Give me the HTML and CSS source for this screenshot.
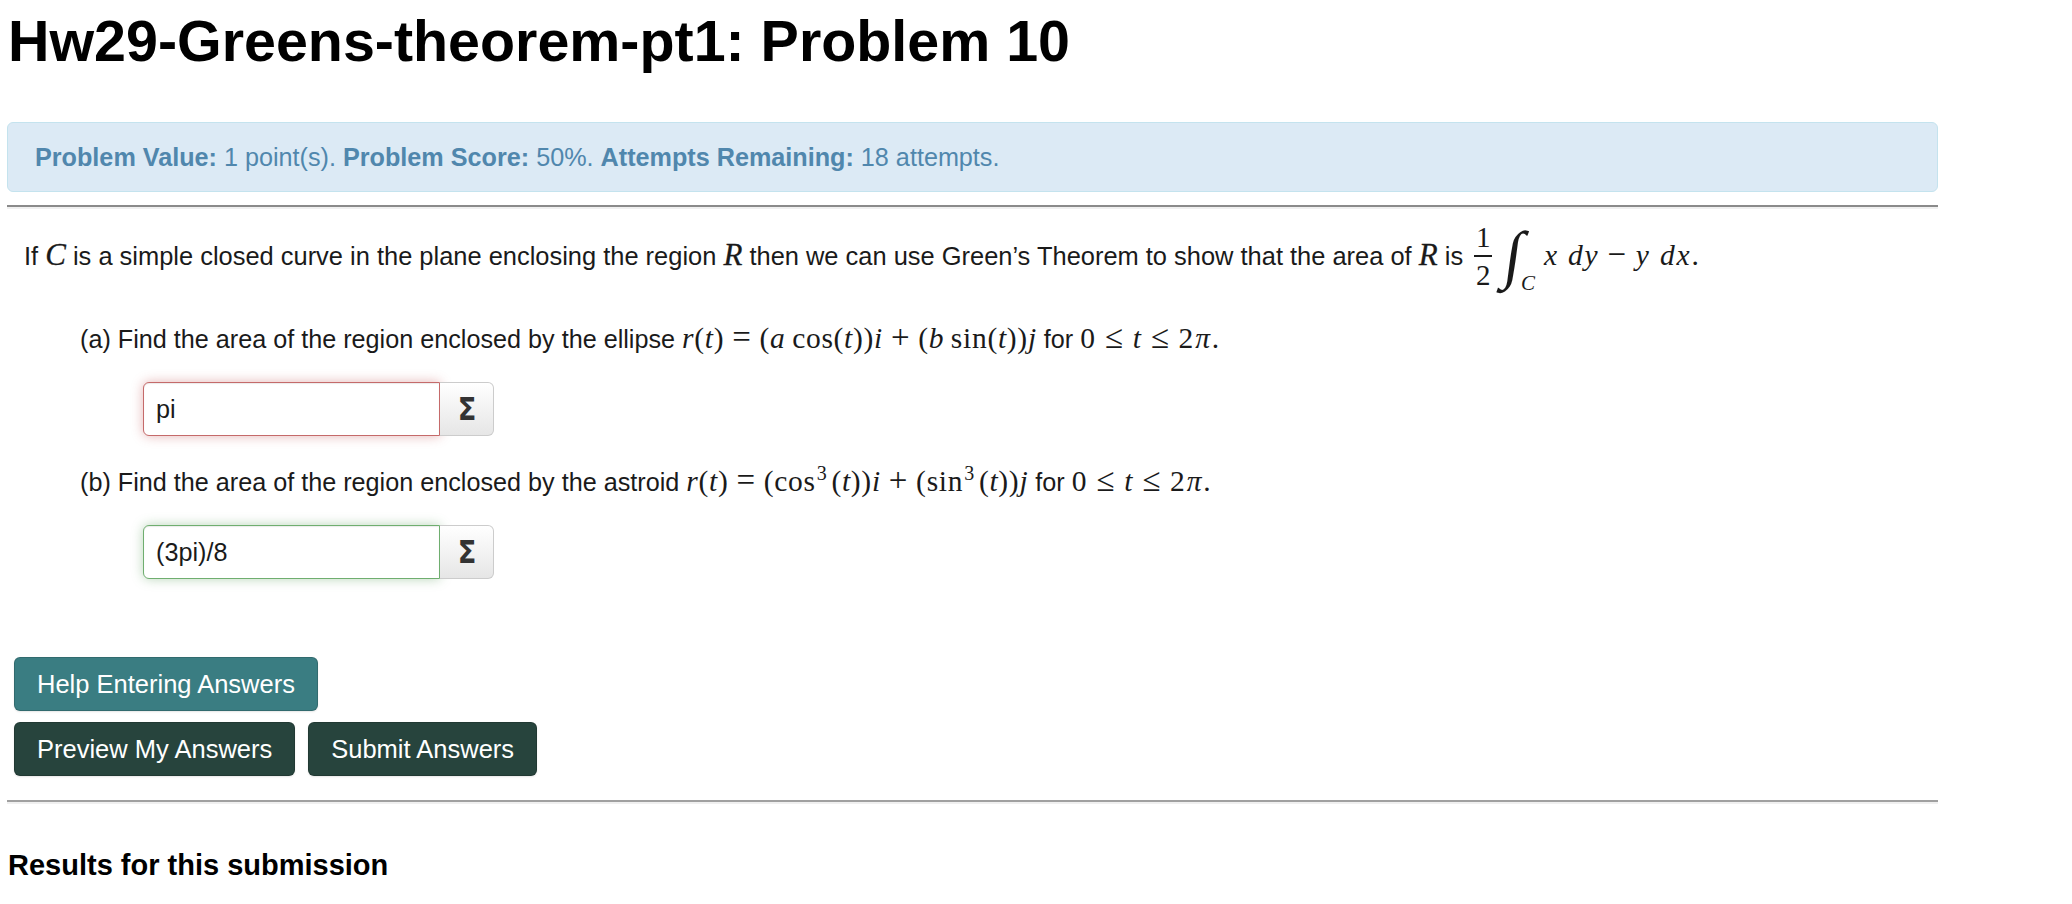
FILE: index.html
```html
<!DOCTYPE html>
<html>
<head>
    <title>Hw29-Greens-theorem-pt1: Problem 10</title>
    <link rel="stylesheet" href="styles.css">
</head>
<body>
    <div class="container">
        <h1>Hw29-Greens-theorem-pt1: Problem 10</h1>
        <div class="problemInfo">
            <b>Problem Value:</b> 1 point(s). <b>Problem Score:</b> 50%. <b>Attempts Remaining:</b> 18 attempts.
        </div>
        <hr class="topRule">
        <p class="intro">
            If <span class="mi big">C</span> is a simple closed curve in the plane enclosing the region <span class="mi big">R</span> then we can use Green’s Theorem to show that the area of <span class="mi big">R</span> is
            <span class="frac"><span class="num">1</span><span class="den">2</span></span>
            <span class="integral">∫<span class="sub">C</span></span>
            <span class="math wide"><i>x</i> <i>dy</i><span class="op">−</span><i>y</i> <i>dx</i>.</span>
        </p>
        <p class="part">
            (a) Find the area of the region enclosed by the ellipse
            <span class="math"><i>r</i>(<i>t</i>)<span class="op">=</span>(<i>a</i>&#8201;cos(<i>t</i>))<i>i</i><span class="op">+</span>(<i>b</i>&#8201;sin(<i>t</i>))<i>j</i></span>
            for <span class="math wide">0<span class="op">≤</span><i>t</i><span class="op">≤</span>2<i>π</i>.</span>
        </p>
        <div class="answerRow">
            <input type="text" class="answer incorrect" value="pi">
            <button class="sigma"><span>Σ</span></button>
        </div>
        <p class="part">
            (b) Find the area of the region enclosed by the astroid
            <span class="math"><i>r</i>(<i>t</i>)<span class="op">=</span>(cos<sup>3</sup>(<i>t</i>))<i>i</i><span class="op">+</span>(sin<sup>3</sup>(<i>t</i>))<i>j</i></span>
            for <span class="math wide">0<span class="op">≤</span><i>t</i><span class="op">≤</span>2<i>π</i>.</span>
        </p>
        <div class="answerRow">
            <input type="text" class="answer correct" value="(3pi)/8">
            <button class="sigma"><span>Σ</span></button>
        </div>
        <div class="buttons">
            <div><button class="btn help">Help Entering Answers</button></div>
            <div class="submitRow">
                <button class="btn dark">Preview My Answers</button>
                <button class="btn dark">Submit Answers</button>
            </div>
        </div>
        <hr class="bottomRule">
        <h3>Results for this submission</h3>
    </div>
</body>
</html>
```

FILE: styles.css
```css
body {
    font-family: "Liberation Sans", Arial, sans-serif;
    font-size: 25.2px;
    color: #1a1a1a;
    margin: 0;
    background-color: #ffffff;
}
.container {
    width: 1931px;
    margin-left: 7px;
}
h1 {
    font-size: 57.4px;
    line-height: 62px;
    color: #000000;
    margin: 10px 0 0 1px;
}
.problemInfo {
    margin-top: 50px;
    height: 70px;
    line-height: 68px;
    box-sizing: border-box;
    padding-left: 27px;
    background-color: #dceaf5;
    border: 1px solid #c4e3ee;
    border-radius: 6px;
    color: #5087ad;
}
hr {
    border: none;
    border-top: 2px solid #8a8a8a;
    border-bottom: 2px solid #f0f0f0;
    margin: 0;
}
.topRule {
    margin-top: 13px;
}
.intro {
    margin: 0 0 0 17px;
    height: 101px;
    line-height: 92px;
    font-size: 25.45px;
    white-space: nowrap;
}
.mi {
    font-family: "Liberation Serif", serif;
    font-style: italic;
}
.big {
    font-size: 31px;
    -webkit-text-stroke: 0.3px #1a1a1a;
}
.math {
    font-family: "Liberation Serif", serif;
    font-size: 29.5px;
    letter-spacing: 0.7px;
}
.wide {
    letter-spacing: 1.8px;
}
.op {
    font-size: 33px;
    line-height: 0;
    margin: 0 8px;
}
.math sup {
    font-size: 20px;
    line-height: 0;
    margin: 0 4px 0 1px;
}
.frac {
    display: inline-flex;
    flex-direction: column;
    align-items: center;
    vertical-align: middle;
    font-family: "Liberation Serif", serif;
    font-size: 29px;
    line-height: 36px;
    margin: -4px 6px 0 4px;
}
.den {
    border-top: 2px solid #1a1a1a;
    width: 18px;
    text-align: center;
}
.integral {
    display: inline-block;
    font-family: "Liberation Serif", serif;
    font-size: 64px;
    line-height: 64px;
    margin: 0 14px 0 0;
    position: relative;
    vertical-align: -11px;
    transform: skewX(-8deg);
}
.sub {
    position: absolute;
    font-size: 21px;
    font-style: italic;
    left: 20px;
    bottom: -8px;
    line-height: 24px;
    transform: skewX(8deg);
}
.part {
    margin: 0 0 0 73px;
    height: 56px;
    line-height: 56px;
    white-space: nowrap;
}
.answerRow {
    display: flex;
    margin: 16px 0 17px 136px;
}
.answer {
    width: 297px;
    height: 54px;
    box-sizing: border-box;
    padding: 0 12px;
    font-family: "Liberation Sans", Arial, sans-serif;
    font-size: 25.2px;
    color: #1a1a1a;
    border-radius: 6px 0 0 6px;
    border: 1px solid #ccc;
}
.incorrect {
    border-color: #c56a6a;
    box-shadow: inset 0 1px 1px rgba(0, 0, 0, 0.08), 0 0 12px rgba(190, 70, 70, 0.4);
}
.correct {
    border-color: #6fae6f;
    box-shadow: inset 0 1px 1px rgba(0, 0, 0, 0.08), 0 0 12px rgba(80, 150, 80, 0.4);
}
.sigma {
    width: 54px;
    height: 54px;
    padding: 0;
    font-family: "DejaVu Sans", sans-serif;
    font-size: 32px;
    font-weight: bold;
    color: #333333;
    background: linear-gradient(#ffffff, #e6e6e6);
    border: 1px solid #cccccc;
    border-left: none;
    border-radius: 0 6px 6px 0;
}
.sigma span {
    display: inline-block;
    transform: scaleX(0.85);
}
.buttons {
    margin: 78px 0 0 7px;
}
.btn {
    height: 54px;
    padding: 0 22px;
    font-family: "Liberation Sans", Arial, sans-serif;
    font-size: 25.5px;
    color: #ffffff;
    border: 1px solid rgba(0, 0, 0, 0.15);
    border-radius: 6px;
    box-shadow: 0 1px 2px rgba(0, 0, 0, 0.1);
}
.help {
    background-color: #3a7d82;
}
.dark {
    background-color: #27443d;
}
.submitRow {
    display: flex;
    gap: 13px;
    margin-top: 11px;
}
.bottomRule {
    margin-top: 24px;
    border-top-color: #a0a0a0;
}
h3 {
    font-size: 29px;
    line-height: 34px;
    color: #000000;
    margin: 44px 0 0 1px;
}
```
